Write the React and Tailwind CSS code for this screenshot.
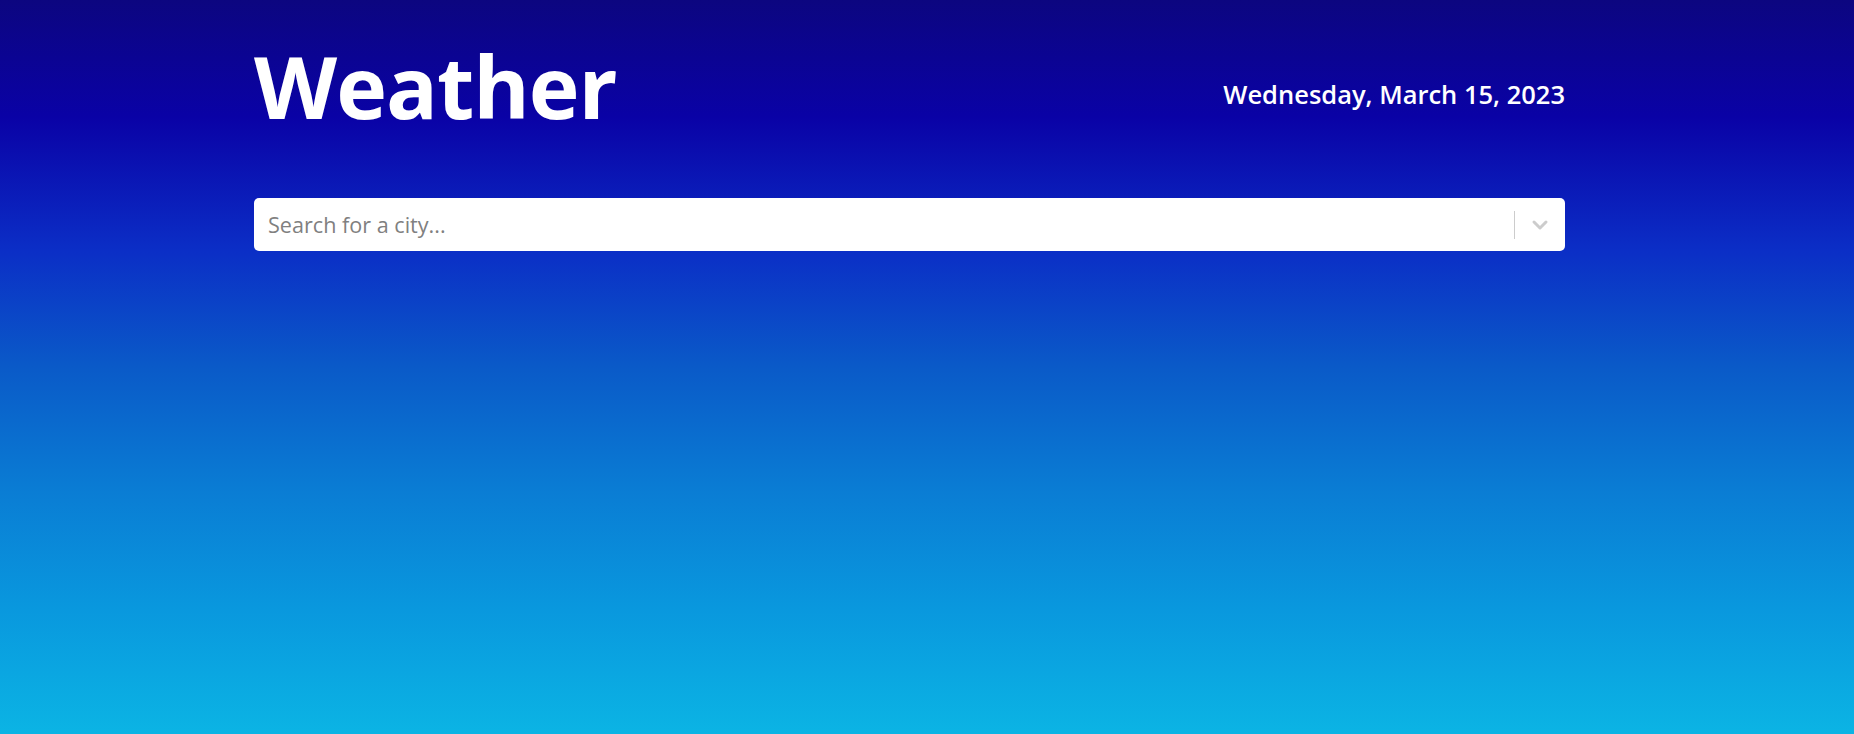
import React from 'react';
import { ChevronDown } from 'lucide-react';

const App = () => {
  return (
    <div className="min-h-[734px] w-full bg-[linear-gradient(180deg,#0c0680_0%,#0a02a6_16%,#0b2ec6_34%,#0a5ac8_50%,#0a7dd4_67%,#0998de_83%,#0bb4e4_100%)] font-['Open_Sans',sans-serif] text-white">
      <div className="w-[1311px] ml-[254px] pt-[30px]">
        {/* Header */}
        <div className="flex items-center justify-between">
          <h1 className="text-[86px] font-bold leading-[112px] tracking-[-1px]">Weather</h1>
          <p className="mt-[16px] text-[25.5px] font-semibold">Wednesday, March 15, 2023</p>
        </div>

        {/* City search */}
        <div className="mt-[56px] h-[53px] bg-white rounded-[5px] flex items-center">
          <input
            type="text"
            placeholder="Search for a city..."
            className="flex-1 h-full bg-transparent px-[14px] text-[21.6px] text-gray-700 placeholder:text-[#808080] outline-none"
          />
          <div className="w-px h-[28px] bg-[#cccccc]" />
          <div className="w-[50px] flex items-center justify-center text-[#cccccc]">
            <ChevronDown size={24} strokeWidth={3} />
          </div>
        </div>
      </div>
    </div>
  );
};

export default App;
